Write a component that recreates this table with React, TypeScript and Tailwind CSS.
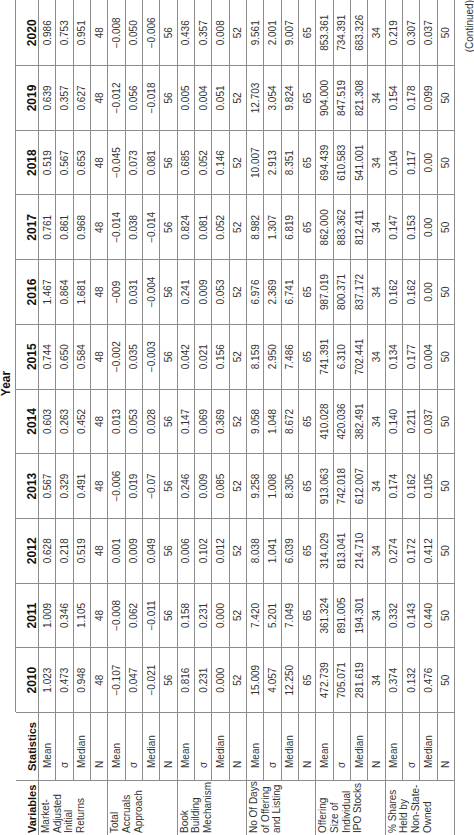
import React from 'react';

const YEARS = ['2010', '2011', '2012', '2013', '2014', '2015', '2016', '2017', '2018', '2019', '2020'];

type Row = [string, string[]];
type Group = { label: string[]; rows: Row[] };

const fill = (v: string) => Array.from({ length: 11 }, () => v);

const GROUPS: Group[] = [
  {
    label: ['Market-', 'Adjusted', 'Initial', 'Returns'],
    rows: [
      ['Mean', ['1.023', '1.009', '0.628', '0.567', '0.603', '0.744', '1.467', '0.761', '0.519', '0.639', '0.986']],
      ['σ', ['0.473', '0.346', '0.218', '0.329', '0.263', '0.650', '0.864', '0.861', '0.567', '0.357', '0.753']],
      ['Median', ['0.948', '1.105', '0.519', '0.491', '0.452', '0.584', '1.681', '0.968', '0.653', '0.627', '0.951']],
      ['N', fill('48')],
    ],
  },
  {
    label: ['Total', 'Accruals', 'Approach'],
    rows: [
      ['Mean', ['−0.107', '−0.008', '0.001', '−0.006', '0.013', '−0.002', '−009', '−0.014', '−0.045', '−0.012', '−0.008']],
      ['σ', ['0.047', '0.062', '0.009', '0.019', '0.053', '0.035', '0.031', '0.038', '0.073', '0.056', '0.050']],
      ['Median', ['−0.021', '−0.011', '0.049', '−0.07', '0.028', '−0.003', '−0.004', '−0.014', '0.081', '−0.018', '−0.006']],
      ['N', fill('56')],
    ],
  },
  {
    label: ['Book', 'Building', 'Mechanism'],
    rows: [
      ['Mean', ['0.816', '0.158', '0.006', '0.246', '0.147', '0.042', '0.241', '0.824', '0.685', '0.005', '0.436']],
      ['σ', ['0.231', '0.231', '0.102', '0.009', '0.069', '0.021', '0.009', '0.081', '0.052', '0.004', '0.357']],
      ['Median', ['0.000', '0.000', '0.012', '0.085', '0.369', '0.156', '0.053', '0.052', '0.146', '0.051', '0.008']],
      ['N', fill('52')],
    ],
  },
  {
    label: ['No Of Days', 'of Offering', 'and Listing'],
    rows: [
      ['Mean', ['15.009', '7.420', '8.038', '9.258', '9.058', '8.159', '6.976', '8.982', '10.007', '12.703', '9.561']],
      ['σ', ['4.057', '5.201', '1.041', '1.008', '1.048', '2.950', '2.369', '1.307', '2.913', '3.054', '2.001']],
      ['Median', ['12.250', '7.049', '6.039', '8.305', '8.672', '7.486', '6.741', '6.819', '8.351', '9.824', '9.007']],
      ['N', fill('65')],
    ],
  },
  {
    label: ['Offering', 'Size of', 'Individual', 'IPO Stocks'],
    rows: [
      ['Mean', ['472.739', '361.324', '314.029', '913.063', '410.028', '741.391', '987.019', '862.000', '694.439', '904.000', '853.361']],
      ['σ', ['705.071', '891.005', '813.041', '742.018', '420.036', '6.310', '800.371', '883.362', '610.583', '847.519', '734.391']],
      ['Median', ['281.619', '194.301', '214.710', '612.007', '382.491', '702.441', '837.172', '812.411', '541.001', '821.308', '683.326']],
      ['N', fill('34')],
    ],
  },
  {
    label: ['% Shares', 'Held by', 'Non-State-', 'Owned'],
    rows: [
      ['Mean', ['0.374', '0.332', '0.274', '0.174', '0.140', '0.134', '0.162', '0.147', '0.104', '0.154', '0.219']],
      ['σ', ['0.132', '0.143', '0.172', '0.162', '0.211', '0.177', '0.162', '0.153', '0.117', '0.178', '0.307']],
      ['Median', ['0.476', '0.440', '0.412', '0.105', '0.037', '0.004', '0.00', '0.00', '0.00', '0.099', '0.037']],
      ['N', fill('50')],
    ],
  },
];

export default function App() {
  return (
    <div className="w-[474px] h-[835px] overflow-hidden bg-white">
      <div className="w-[835px] h-[474px] origin-top-left translate-y-[835px] -rotate-90 font-['Liberation_Sans',Arial,sans-serif] text-[#333333]">
        {/* Spanner row */}
        <div className="flex h-[16px]">
          <div className="w-[123px] shrink-0" />
          <div className="w-[712px] shrink-0 border-b border-[#8c8c8c] flex justify-center pr-[55px] text-[12px] font-bold leading-[12px] text-[#111111]">
            Year
          </div>
        </div>

        {/* Header row */}
        <div className="flex h-[23px] border-b border-[#8c8c8c] text-[#111111]">
          <div className="w-[55px] shrink-0 border-r border-[#8c8c8c] flex items-end pl-[2px] text-[11px] font-bold leading-[12px]">
            Variables
          </div>
          <div className="w-[68px] shrink-0 border-r border-[#8c8c8c] flex items-end justify-center text-[11px] font-bold leading-[12px]">
            Statistics
          </div>
          {YEARS.map((y, i) => (
            <div
              key={y}
              className={`w-[64.7px] shrink-0 flex items-end justify-center text-[12px] font-bold leading-[12px] ${
                i < 10 ? 'border-r border-[#8c8c8c]' : ''
              }`}
            >
              {y}
            </div>
          ))}
        </div>

        {/* Body */}
        {GROUPS.map((g, gi) => (
          <div key={gi} className="flex">
            <div className="w-[55px] shrink-0 border-r border-b border-[#8c8c8c] pl-[2px] pt-[1px] text-[10px] leading-[11.7px] text-[#333333]">
              {g.label.map((l, li) => (
                <div key={li} className="whitespace-nowrap">
                  {l}
                </div>
              ))}
            </div>
            <div className="flex flex-col">
              {g.rows.map(([stat, vals], ri) => (
                <div key={ri} className="flex h-[17.33px] border-b border-[#8c8c8c]">
                  <div className="w-[68px] shrink-0 border-r border-[#8c8c8c] flex items-center pl-[12px] text-[10px] leading-[11px]">
                    {stat}
                  </div>
                  {vals.map((v, vi) => (
                    <div
                      key={vi}
                      className={`w-[64.7px] shrink-0 flex items-center justify-center text-[10px] leading-[11px] ${
                        vi < 10 ? 'border-r border-[#8c8c8c]' : ''
                      }`}
                    >
                      {v}
                    </div>
                  ))}
                </div>
              ))}
            </div>
          </div>
        ))}

        {/* Footer note */}
        <div className="flex justify-end mt-[9px] text-[10px] leading-[12px] text-[#333333]">(Continued)</div>
      </div>
    </div>
  );
}
